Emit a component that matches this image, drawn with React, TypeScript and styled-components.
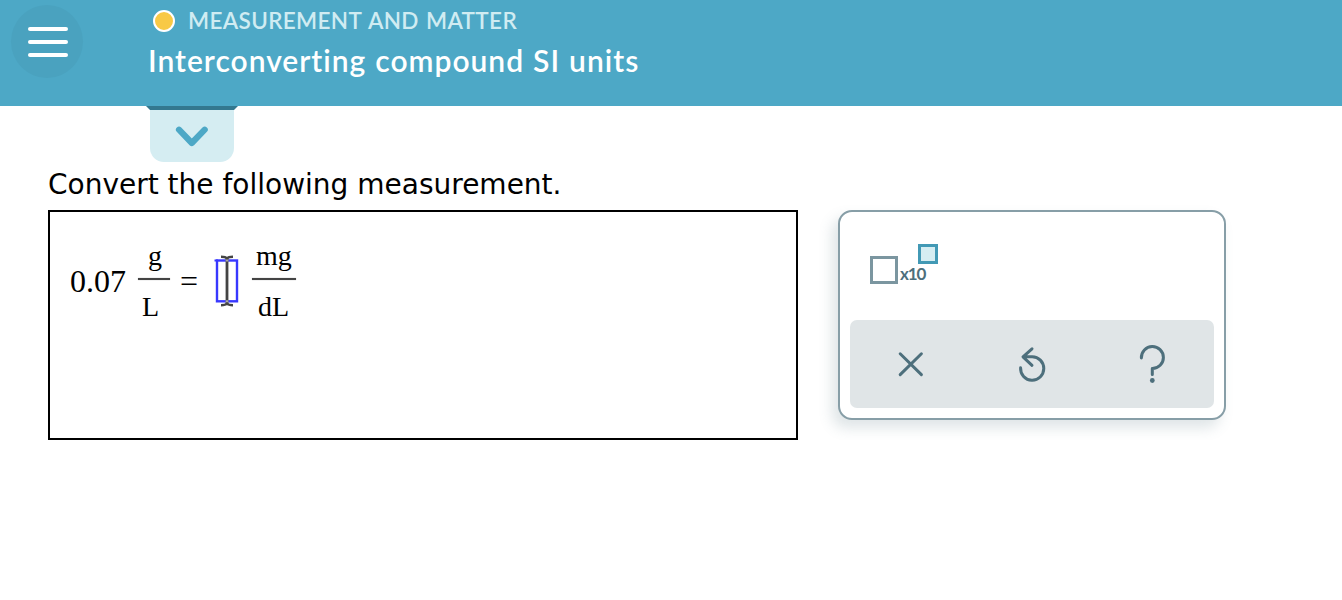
import { useState } from 'react'
import styled, { createGlobalStyle } from 'styled-components'

const GlobalStyle = createGlobalStyle`
* { box-sizing: border-box; }
body {
  margin: 0;
  background: #fff;
  overflow: hidden;
}
`

//the top bar with the menu button and the topic titles
const Header = styled.header`
display: flex;
align-items: flex-start;
height: 105.5px;
padding: 5px 0 0 11px;
background: #4da8c6;
`
const MenuButton = styled.button`
display: flex;
flex-direction: column;
align-items: center;
justify-content: center;
gap: 9px;
width: 72px;
height: 73px;
padding: 0 0 0 1px;
border: none;
border-radius: 50%;
background: #4aa2bf;
`
const MenuLine = styled.span`
width: 40px;
height: 4px;
border-radius: 2px;
background: #fff;
`
const Titles = styled.div`
margin-left: 65px;
font-family: Lato, "Liberation Sans", sans-serif;
white-space: nowrap;
`
const Topic = styled.div`
display: flex;
align-items: center;
gap: 13px;
height: 32px;
padding-left: 5px;
`
const Dot = styled.span`
width: 22px;
height: 22px;
border: 2px solid #fff;
border-radius: 50%;
background: #f8c945;
`
const TopicName = styled.span`
height: 31px;
color: #d0ecf2;
font-size: 22.5px;
font-weight: 600;
line-height: 30px;
letter-spacing: 0.35px;
word-spacing: 1.2px;
`
const Title = styled.h1`
margin: 4px 0 0;
color: #fff;
font-size: 30px;
font-weight: 600;
line-height: 38px;
letter-spacing: 1px;
word-spacing: 0.5px;
`

//the tab that hangs under the header
const Tab = styled.button`
display: block;
width: 92px;
height: 56px;
margin-left: 146px;
padding: 0;
border: none;
background: none;

svg { display: block; }
`

const Content = styled.main`
padding: 0 48px;
`
const Prompt = styled.p`
margin: 0;
height: 48.5px;
padding-top: 4px;
color: #000;
font-family: "DejaVu Sans", Verdana, sans-serif;
font-size: 28px;
line-height: 38px;
white-space: nowrap;
`
const Workspace = styled.div`
display: flex;
align-items: flex-start;
gap: 40px;
`
const AnswerBox = styled.div`
width: 750px;
height: 230px;
padding: 31px 20px;
border: 2px solid #000;
`
const Equation = styled.div`
display: flex;
align-items: flex-start;
color: #000;
font-family: "Liberation Serif", "Times New Roman", serif;
`
const Term = styled.span<{ $left?: number }>`
margin: 19px 0 0 ${(props) => props.$left || 0}px;
font-size: 32px;
line-height: 38px;
`
const Fraction = styled.span<{ $left: number; $width: number }>`
display: flex;
flex-direction: column;
width: ${(props) => props.$width}px;
margin-left: ${(props) => props.$left}px;
font-size: 28px;
line-height: 26px;
`
const Numerator = styled.span<{ $indent: number }>`
height: 35px;
padding-left: ${(props) => props.$indent}px;
`
const Denominator = styled(Numerator)`
height: auto;
margin-top: 14px;
`
const FractionBar = styled.span`
height: 2px;
background: #444;
box-shadow: 0 0 1px #777;
`
const Field = styled.span`
width: 26px;
height: 52px;
margin: 12px 0 0 15px;

svg { display: block; }
`

const Panel = styled.aside`
display: flex;
flex-direction: column;
justify-content: space-between;
width: 388px;
height: 210px;
padding: 10px;
border: 2px solid #879ea7;
border-radius: 14px;
background: #fff;
box-shadow: -6px 8px 14px rgba(77, 111, 124, 0.18);
`
const PowerKey = styled.button`
display: flex;
align-items: flex-start;
margin: 22px 0 0 20px;
padding: 0;
border: none;
background: none;
`
const Square = styled.span<{ $small?: boolean }>`
width: ${(props) => (props.$small ? 20 : 28)}px;
height: ${(props) => (props.$small ? 20 : 28)}px;
margin-top: ${(props) => (props.$small ? 0 : 12)}px;
border: 3px solid ${(props) => (props.$small ? '#4299b5' : '#7b96a0')};
background: ${(props) => (props.$small ? '#d5edf2' : '#fff')};
`
const Base = styled.span`
width: 20px;
padding: 20px 0 0 2px;
color: #4d6f7c;
font-family: Lato, "Liberation Sans", sans-serif;
font-size: 17px;
font-weight: 700;
line-height: 20px;
letter-spacing: -1.1px;
text-align: left;
white-space: nowrap;
`
const Actions = styled.div`
display: grid;
grid-template-columns: repeat(3, 1fr);
height: 88px;
border-radius: 7px;
background: #e0e5e7;
`
const Action = styled.button`
display: flex;
align-items: center;
justify-content: center;
padding: 0;
border: none;
background: none;

svg {
  fill: none;
  stroke: #4d6f7c;
  stroke-width: 3;
  stroke-linecap: round;
  stroke-linejoin: round;
}
`
const HelpDot = styled.circle`
fill: #4d6f7c;
stroke: none;
`

const TabShape = () => (
  <svg width="92" height="56" viewBox="0 0 92 56">
    <path d="M4 0H88V42A14 14 0 0 1 74 56H18A14 14 0 0 1 4 42Z" fill="#d5edf2" />
    <path d="M0 0H92L88 4H4Z" fill="#33788f" />
    <path d="M33 23.7L45.8 37L58.7 23.7" fill="none" stroke="#4da8c6" strokeWidth="6.2" strokeLinecap="round" strokeLinejoin="round" />
  </svg>
)

//the empty input with the text cursor over it
const EmptyField = () => (
  <svg width="26" height="52" viewBox="0 0 26 52" fill="none">
    <rect x="4" y="5.5" width="20" height="40.8" stroke="#3838ff" strokeWidth="2.4" />
    <path d="M1.5 5.5H5" stroke="#3838ff" strokeWidth="2" />
    <path d="M14 4V48" stroke="#444" strokeWidth="2.8" />
    <path d="M8 1.8C11 1.8 13 2.2 14 3.4C15 2.2 17 1.8 20 1.8M8 50.2C11 50.2 13 49.8 14 48.6C15 49.8 17 50.2 20 50.2" stroke="#444" strokeWidth="2.4" />
    <path d="M12.6 5.5H15.4M12.6 46.3H15.4" stroke="#aaa" strokeWidth="2" />
  </svg>
)

const ClearIcon = () => (
  <svg width="40" height="40" viewBox="0 0 40 40">
    <path d="M9.2 9.8L30.4 30.6M30.4 9.8L9.2 30.6" />
  </svg>
)

const ResetIcon = () => (
  <svg width="40" height="40" viewBox="0 0 40 40">
    <path d="M8.6 23.8A11.6 11.8 0 1 0 20 12.7H11.5M20 4.8L11 12.8L20 21.3" />
  </svg>
)

const HelpIcon = () => (
  <svg width="40" height="40" viewBox="0 0 40 40">
    <path d="M8.4 13.9A11 11 0 1 1 19.3 24.5V30.5" />
    <HelpDot cx="19.3" cy="36.5" r="2.4" />
  </svg>
)

const App = () => {
  const [open, setOpen] = useState<boolean>(false)//state of the hanging tab

  return (
    <>
      <GlobalStyle />
      <Header>
        <MenuButton aria-label="Menu">
          <MenuLine />
          <MenuLine />
          <MenuLine />
        </MenuButton>
        <Titles>
          <Topic>
            <Dot />
            <TopicName>MEASUREMENT AND MATTER</TopicName>
          </Topic>
          <Title>Interconverting compound SI units</Title>
        </Titles>
      </Header>
      <Tab aria-label="Details" aria-expanded={open} onClick={() => setOpen(!open)}>
        <TabShape />
      </Tab>
      <Content>
        <Prompt>Convert the following measurement.</Prompt>
        <Workspace>
          <AnswerBox>
            <Equation>
              <Term>0.07</Term>
              <Fraction $left={12} $width={32}>
                <Numerator $indent={10}>g</Numerator>
                <FractionBar />
                <Denominator $indent={4}>L</Denominator>
              </Fraction>
              <Term $left={10}>=</Term>
              <Field>
                <EmptyField />
              </Field>
              <Fraction $left={13} $width={44}>
                <Numerator $indent={4}>mg</Numerator>
                <FractionBar />
                <Denominator $indent={6}>dL</Denominator>
              </Fraction>
            </Equation>
          </AnswerBox>
          <Panel>
            <PowerKey aria-label="Scientific notation">
              <Square />
              <Base>x10</Base>
              <Square $small />
            </PowerKey>
            <Actions>
              <Action aria-label="Clear"><ClearIcon /></Action>
              <Action aria-label="Reset"><ResetIcon /></Action>
              <Action aria-label="Help"><HelpIcon /></Action>
            </Actions>
          </Panel>
        </Workspace>
      </Content>
    </>
  )
}

export default App
